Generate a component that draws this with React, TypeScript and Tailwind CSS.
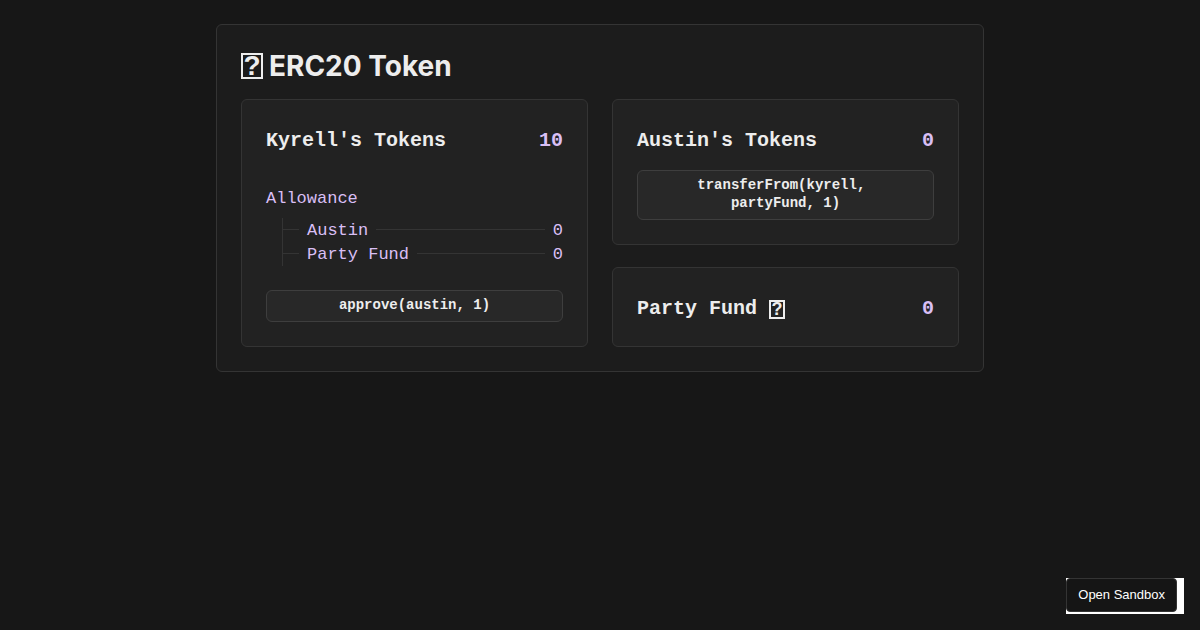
import type { ReactNode } from "react";

function MissingGlyph({ className }: { className: string }) {
  return (
    <span
      className={`inline-flex shrink-0 items-center justify-center border-2 border-[#ededed] font-['Liberation_Sans'] font-bold ${className}`}
    >
      ?
    </span>
  );
}

function Card({ children }: { children: ReactNode }) {
  return (
    <section className="rounded-md border border-[#343434] bg-[#222222] p-6">{children}</section>
  );
}

function CardHeader({ title, count }: { title: ReactNode; count: number }) {
  return (
    <div className="flex items-center justify-between pt-1 text-xl leading-[26px] font-bold">
      <h2 className="flex items-center gap-3">{title}</h2>
      <span className="text-[#d9bff5]">{count}</span>
    </div>
  );
}

function ActionButton({ children }: { children: string }) {
  return (
    <button
      type="button"
      className="block w-full rounded-md border border-[#3e3e3e] bg-[#282828] px-6 pt-[5px] pb-[7px] text-center text-sm leading-[18px] font-bold whitespace-break-spaces"
    >
      {children}
    </button>
  );
}

function AllowanceRow({ name, amount }: { name: string; amount: number }) {
  return (
    <li className="flex h-6 items-center gap-2 pb-px">
      <span className="h-px w-4 bg-[#343434]" />
      <span className="pt-[3px]">{name}</span>
      <span className="h-px flex-1 bg-[#343434]" />
      <span className="pt-[3px]">{amount}</span>
    </li>
  );
}

export default function App() {
  return (
    <div className="min-h-screen bg-[#171717] p-6 font-['Liberation_Mono',monospace] text-[#ededed]">
      <main className="mx-auto max-w-3xl rounded-md border border-[#343434] bg-[#1c1c1c] p-6">
        <h1 className="mb-4 flex items-center gap-1.5 font-['Inter',sans-serif] text-[28px] leading-[34px] font-bold">
          <MissingGlyph className="h-[26px] w-[22px] text-[28px] leading-none" />
          ERC20 Token
        </h1>
        <div className="grid grid-cols-2 gap-6">
          <Card>
            <CardHeader title="Kyrell's Tokens" count={10} />
            <div className="mt-[33px] mb-6 text-[17px] leading-6 text-[#d9bff5]">
              <h3>Allowance</h3>
              <ul className="mt-[7px] ml-4 border-l border-[#343434]">
                <AllowanceRow name="Austin" amount={0} />
                <AllowanceRow name="Party Fund" amount={0} />
              </ul>
            </div>
            <ActionButton>approve(austin, 1)</ActionButton>
          </Card>
          <div className="flex flex-col justify-between">
            <Card>
              <CardHeader title="Austin's Tokens" count={0} />
              <div className="mt-4">
                <ActionButton>transferFrom(kyrell, partyFund, 1)</ActionButton>
              </div>
            </Card>
            <Card>
              <CardHeader
                title={
                  <>
                    Party Fund
                    <MissingGlyph className="h-[19px] w-4 text-lg leading-none" />
                  </>
                }
                count={0}
              />
            </Card>
          </div>
        </div>
      </main>
      <div className="fixed right-4 bottom-4 h-9 bg-white pr-[7px]">
        <button
          type="button"
          className="block rounded border border-[#343434] bg-[#151515] px-[11px] py-[7px] font-['Liberation_Sans',sans-serif] text-[13px] leading-[18px] text-white"
        >
          Open Sandbox
        </button>
      </div>
    </div>
  );
}
